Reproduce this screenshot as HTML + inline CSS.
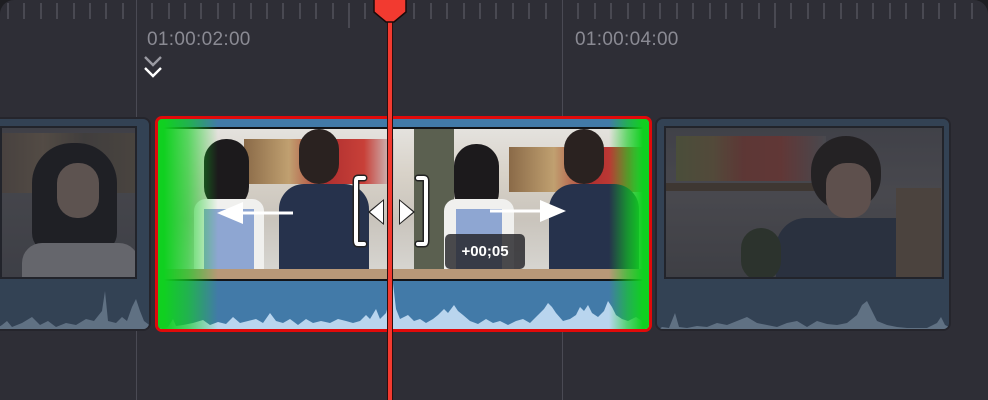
<!DOCTYPE html>
<html><head><meta charset="utf-8"><style>
*{margin:0;padding:0;box-sizing:border-box}
body{width:988px;height:400px;overflow:hidden;background:#1e1e22;font-family:"Liberation Sans",sans-serif}
#root{position:absolute;left:0;top:0;width:988px;height:400px;background:#2e2e36;border-radius:14px 14px 0 0;overflow:hidden}
.vl{position:absolute;top:0;width:1px;background:#4a4a54}
.tc{position:absolute;top:29px;color:#8a8a93;font-size:19px;letter-spacing:0.3px}
.clip{position:absolute;border-radius:8px;background:#3a5068;border:2px solid #25252c;overflow:hidden}
.thumb{position:absolute;border:2px solid #1f2328;overflow:hidden}
.dim{position:absolute;left:0;top:0;right:0;bottom:0;background:rgba(40,40,48,0.35)}
.tri{position:absolute;width:0;height:0;border-top:11px solid transparent;border-bottom:11px solid transparent}
</style></head><body><div id="root">
<svg width="988" height="30" style="position:absolute;left:0;top:0" stroke="#585862" stroke-width="1.3">
<path d="M8 3V19M24 3V19M41 3V19M57 3V19M74 3V19M90 3V19M106 3V19M123 3V19M152 3V19M169 3V19M185 3V19M201 3V19M218 3V19M234 3V19M251 3V19M267 3V19M283 3V19M300 3V19M316 3V19M333 3V19M349 3V28M365 3V19M382 3V19M414 3V19M431 3V19M447 3V19M464 3V19M480 3V19M496 3V19M513 3V19M529 3V19M546 3V19M578 3V19M595 3V19M611 3V19M628 3V19M644 3V19M660 3V19M677 3V19M693 3V19M710 3V19M726 3V19M742 3V19M759 3V19M775 3V28M791 3V19M808 3V19M824 3V19M841 3V19M857 3V19M873 3V19M890 3V19M906 3V19M923 3V19M939 3V19M955 3V19M972 3V19"/>
</svg>
<div class="vl" style="left:136px;height:400px"></div>
<div class="vl" style="left:562px;height:400px"></div>
<div class="tc" style="left:147px">01:00:02:00</div>
<div class="tc" style="left:575px">01:00:04:00</div>
<svg width="26" height="28" style="position:absolute;left:142px;top:54px" fill="none" stroke-width="2.4">
<path d="M3 3L11 11L19 3" stroke="#9a9aa2"/><path d="M3 14L11 22L19 14" stroke="#fff"/>
</svg>

<div class="clip" style="left:-10px;top:117px;width:161px;height:214px">
<div class="thumb" style="left:8px;top:7px;width:137px;height:153px;background:linear-gradient(180deg,#4c4e54 0%,#55565a 40%,#4a4c52 100%)">
<div style="position:absolute;left:0;top:5px;width:137px;height:60px;background:linear-gradient(90deg,#5a5048,#6a5e50 30%,#4e4a44 60%,#5c5448)"></div>
<div style="position:absolute;left:30px;top:15px;width:85px;height:110px;border-radius:40px 40px 20px 20px;background:#1b1c20"></div>
<div style="position:absolute;left:55px;top:35px;width:42px;height:55px;border-radius:20px;background:#7a6a62"></div>
<div style="position:absolute;left:20px;top:115px;width:117px;height:40px;background:#86888c;border-radius:20px 20px 0 0"></div>
</div>
<svg width="161" height="50" style="position:absolute;left:0;top:162px">
<path fill="#7f98b0" d="M0 50L10 44L15 40L20 46L30 42L40 36L48 44L56 40L64 46L74 42L84 44L94 38L102 40L110 30L113 10L116 40L124 42L130 36L135 40L140 26L144 18L148 30L152 40L160 46L161 50Z"/>
</svg>
<div class="dim"></div>
</div>

<div class="clip" style="left:655px;top:117px;width:296px;height:214px">
<div class="thumb" style="left:7px;top:7px;width:280px;height:153px;background:linear-gradient(180deg,#4e4f55 0%,#5a5a5e 45%,#4b4c50 100%)">
<div style="position:absolute;left:10px;top:8px;width:150px;height:45px;background:linear-gradient(90deg,#5d6340,#6a5c40 25%,#7a3f38 45%,#80403a 70%,#5a5a5e)"></div>
<div style="position:absolute;left:0;top:55px;width:150px;height:8px;background:#4b3f34"></div>
<div style="position:absolute;left:145px;top:8px;width:70px;height:75px;border-radius:35px;background:#231f1e"></div>
<div style="position:absolute;left:160px;top:35px;width:45px;height:55px;border-radius:20px;background:#7b665c"></div>
<div style="position:absolute;left:110px;top:90px;width:150px;height:63px;background:#2c3648;border-radius:30px 30px 0 0"></div>
<div style="position:absolute;left:230px;top:60px;width:45px;height:93px;background:#5e5246"></div>
<div style="position:absolute;left:75px;top:100px;width:40px;height:53px;border-radius:20px;background:#2e3a2c"></div>
</div>
<svg width="296" height="50" style="position:absolute;left:0;top:162px">
<path fill="#7f98b0" d="M0 50L5 46L12 47L18 32L22 46L30 47L40 45L50 46L60 42L70 44L80 40L90 36L100 42L110 44L120 46L130 42L140 40L150 46L160 40L170 43L180 44L190 42L200 34L205 24L210 20L215 30L220 40L230 44L240 46L250 47L260 47L270 47L280 42L284 36L288 44L294 47L296 50Z"/>
</svg>
<div class="dim"></div>
</div>

<div style="position:absolute;left:155px;top:116px;width:497px;height:216px;border:3px solid #e00a0a;border-radius:7px;background:#427aa8;overflow:hidden">
<div style="position:absolute;left:4px;top:8px;width:483px;height:154px;background:#121418"></div>
<div style="position:absolute;left:6px;top:10px;width:479px;height:150px;background:linear-gradient(180deg,#e4e2de 0%,#d8d2c8 30%,#c9c4bc 60%,#d9d8d4 100%);overflow:hidden">
<div style="position:absolute;left:80px;top:10px;width:150px;height:45px;background:linear-gradient(90deg,#8a6a48,#c0a070 30%,#b03030 55%,#c84038 80%,#ccc)"></div>
<div style="position:absolute;left:345px;top:18px;width:150px;height:45px;background:linear-gradient(90deg,#8a6a48,#c0a070 30%,#b03030 55%,#c84038 80%,#ccc)"></div>
<div style="position:absolute;left:40px;top:10px;width:45px;height:70px;border-radius:22px;background:#1c1a1c"></div>
<div style="position:absolute;left:30px;top:70px;width:70px;height:80px;background:#f0f0ee;border-radius:12px 12px 0 0"></div>
<div style="position:absolute;left:40px;top:80px;width:50px;height:70px;background:#8ea6d2"></div>
<div style="position:absolute;left:135px;top:0px;width:40px;height:55px;border-radius:20px;background:#2a2220"></div>
<div style="position:absolute;left:115px;top:55px;width:90px;height:95px;background:#26324c;border-radius:25px 25px 0 0"></div>
<div style="position:absolute;left:250px;top:0;width:40px;height:150px;background:#5b6050"></div>
<div style="position:absolute;left:290px;top:15px;width:45px;height:70px;border-radius:22px;background:#1c1a1c"></div>
<div style="position:absolute;left:280px;top:70px;width:70px;height:80px;background:#f0f0ee;border-radius:12px 12px 0 0"></div>
<div style="position:absolute;left:292px;top:80px;width:46px;height:70px;background:#8ea6d2"></div>
<div style="position:absolute;left:400px;top:0;width:40px;height:55px;border-radius:20px;background:#2a2220"></div>
<div style="position:absolute;left:385px;top:55px;width:90px;height:95px;background:#26324c;border-radius:25px 25px 0 0"></div>
<div style="position:absolute;left:0;top:140px;width:479px;height:10px;background:#b89878"></div>
</div>
<div style="position:absolute;left:233px;top:0;width:2px;height:10px;background:#121418"></div>
<svg width="491" height="50" style="position:absolute;left:0;top:160px">
<path fill="#b9d5ee" d="M0 50L10 48L15 40L18 47L25 46L35 44L45 41L52 46L60 43L68 45L75 38L82 44L90 42L98 40L105 44L112 34L118 42L125 44L132 40L140 46L148 40L155 44L163 42L172 44L180 40L188 42L195 44L202 42L208 36L212 40L218 30L222 40L228 34L232 20L235 4L238 30L242 40L250 36L256 42L262 40L268 44L275 40L280 36L286 30L290 34L296 26L300 32L305 36L312 42L320 45L328 40L335 44L342 42L350 46L358 42L365 40L372 44L380 36L386 30L390 24L394 28L398 34L405 42L412 40L418 36L422 28L426 32L430 26L434 34L440 38L446 32L450 22L454 28L458 36L464 40L470 42L478 38L484 42L491 46L491 50Z"/>
</svg>
<div style="position:absolute;left:0;top:0;width:60px;height:210px;background:linear-gradient(90deg,#10d020 0%,#10d020 10%,rgba(16,208,32,0.65) 50%,rgba(16,208,32,0) 100%)"></div>
<div style="position:absolute;right:0;top:0;width:40px;height:210px;background:linear-gradient(270deg,#10d020 0%,#10d020 15%,rgba(16,208,32,0.6) 55%,rgba(16,208,32,0) 100%)"></div>
</div>

<svg width="90" height="80" style="position:absolute;left:348px;top:172px">
<g fill="none" stroke-linecap="round">
<path d="M16 6H10Q8 6 8 9V69Q8 72 10 72H16" stroke="#222" stroke-width="7"/>
<path d="M16 6H10Q8 6 8 9V69Q8 72 10 72H16" stroke="#fff" stroke-width="4"/>
<path d="M70 6H76Q78 6 78 9V69Q78 72 76 72H70" stroke="#222" stroke-width="7"/>
<path d="M70 6H76Q78 6 78 9V69Q78 72 76 72H70" stroke="#fff" stroke-width="4"/>
</g>
</svg>
<div class="tri" style="left:368px;top:199px;border-top-width:13px;border-bottom-width:13px;border-right:16px solid #222"></div>
<div class="tri" style="left:370px;top:201px;border-right:13px solid #fff"></div>
<div class="tri" style="left:399px;top:199px;border-top-width:13px;border-bottom-width:13px;border-left:16px solid #222"></div>
<div class="tri" style="left:400px;top:201px;border-left:13px solid #fff"></div>

<svg width="100" height="30" style="position:absolute;left:215px;top:198px"><path d="M78 15H22" stroke="#fff" stroke-width="3"/><path d="M2 15L28 4V26Z" fill="#fff"/></svg>
<svg width="100" height="30" style="position:absolute;left:488px;top:196px"><path d="M2 15H60" stroke="#fff" stroke-width="3"/><path d="M78 15L52 4V26Z" fill="#fff"/></svg>
<div style="position:absolute;left:445px;top:234px;width:80px;height:35px;background:rgba(35,35,40,0.82);border-radius:5px;color:#fff;font-weight:bold;font-size:15px;line-height:35px;text-align:center">+00;05</div>

<div style="position:absolute;left:387px;top:14px;width:6px;height:386px;background:#f23a30;border-left:1px solid #2a1010;border-right:1px solid #2a1010"></div>
<svg width="40" height="32" style="position:absolute;left:370px;top:-2px"><path d="M4 0H36V14L24 24H16L4 14Z" fill="#f23a30" stroke="#1a0a0a" stroke-width="1.5"/></svg>
</div></body></html>
